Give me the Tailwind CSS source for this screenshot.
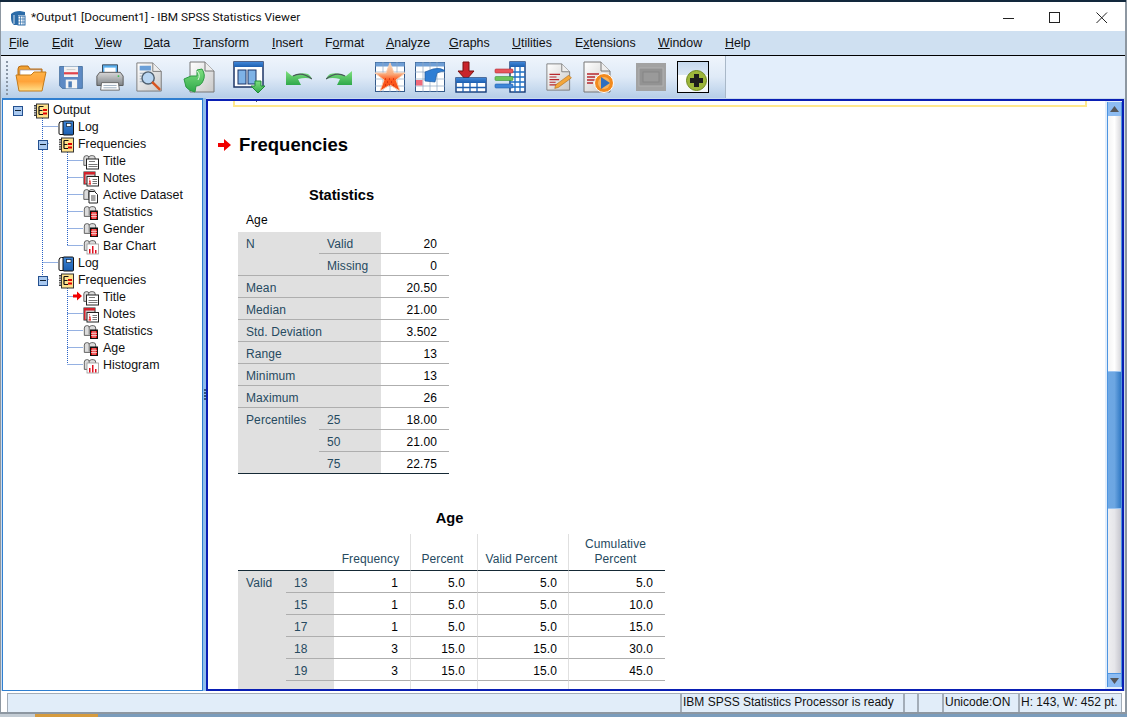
<!DOCTYPE html>
<html lang="en">
<head>
    <meta charset="UTF-8">
    <title>Output1 [Document1] - IBM SPSS Statistics Viewer</title>
    <script src="https://cdn.jsdelivr.net/npm/@tailwindcss/browser@4"></script>
</head>
<body class="w-[1127px] h-[717px] overflow-hidden bg-[#7a9cbc] font-['Liberation_Sans',Arial,sans-serif]">

<!-- shared icons -->
<svg class="absolute w-0 h-0" xmlns="http://www.w3.org/2000/svg">
    <defs>
        <linearGradient id="gFolder" x1="0" y1="0" x2="0" y2="1"><stop offset="0" stop-color="#ffb347"/><stop offset=".5" stop-color="#ffa33a"/><stop offset="1" stop-color="#ffe08a"/></linearGradient>
        <linearGradient id="gBlue" x1="0" y1="0" x2="0" y2="1"><stop offset="0" stop-color="#3f86d8"/><stop offset="1" stop-color="#1d5fb0"/></linearGradient>
        <linearGradient id="gGray" x1="0" y1="0" x2="0" y2="1"><stop offset="0" stop-color="#d8d8d8"/><stop offset="1" stop-color="#7f8488"/></linearGradient>
        <linearGradient id="gGreen" x1="0" y1="0" x2="0" y2="1"><stop offset="0" stop-color="#7fe07f"/><stop offset="1" stop-color="#2fa84a"/></linearGradient>
        <linearGradient id="gPage" x1="0" y1="0" x2="1" y2="1"><stop offset="0" stop-color="#ffffff"/><stop offset="1" stop-color="#c8c8c8"/></linearGradient>
        <linearGradient id="gStar" x1="0" y1="0" x2="0" y2="1"><stop offset="0" stop-color="#f8d9bd"/><stop offset=".4" stop-color="#f9a878"/><stop offset=".6" stop-color="#ff5a1e"/><stop offset="1" stop-color="#f04a14"/></linearGradient>

        <symbol id="iBook" viewBox="0 0 16 16">
            <path d="M1 5 Q1 2 4 2 L5 2 Q7 2 7 4 Q8 2 10 2 L12 2 Q15 2 15 5 L15 14 L1 14Z" fill="#dcdcdc" stroke="#333" stroke-width=".9"/>
            <path d="M7 4V13" stroke="#333" stroke-width=".8"/>
        </symbol>
        <symbol id="iOutput" viewBox="0 0 15 16">
            <rect x="2.500" y="1" width="12" height="14" fill="#ffe28a" stroke="#333"/>
            <path d="M1 2v12" stroke="#111" stroke-width="1.600" stroke-dasharray="1.400 1"/>
            <path d="M5 3.500h4.500M5 3.500v8M5 7.500h3.500M5 11.500h4" stroke="#111" stroke-width="1.200" fill="none"/>
            <rect x="9" y="6" width="4" height="2" fill="#e00000"/><rect x="9" y="9.500" width="4" height="2" fill="#e00000"/>
        </symbol>
        <symbol id="iLog" viewBox="0 0 16 16">
            <path d="M1 4 Q1 1.500 3.500 1.500 L8 1.500 L8 14.500 L2 14.500 Q1 14.500 1 13Z" fill="#fff" stroke="#111"/>
            <rect x="5" y="1" width="10.500" height="14" rx="1" fill="url(#gBlue)" stroke="#111"/>
            <rect x="8.500" y="3.500" width="4.500" height="3" fill="#fff" stroke="#123" stroke-width=".7"/>
        </symbol>
        <symbol id="iTitle" viewBox="0 0 16 16">
            <use href="#iBook" width="13" height="13" y="0"/>
            <rect x="3.500" y="5" width="12" height="10" fill="#fff" stroke="#222"/>
            <path d="M6 8l1-1 1 1 1-1 1 1 1-1 1 1M5.500 10.500h9M5.500 12.500h9" stroke="#555" stroke-width=".8" fill="none"/>
        </symbol>
        <symbol id="iNotes" viewBox="0 0 16 16">
            <rect x="1" y="1" width="11" height="12" fill="#c9c9c9" stroke="#222"/>
            <path d="M1 1h11v2.500h-9.500v9.500H1Z" fill="#d2202a"/>
            <rect x="4" y="5.500" width="11.500" height="9.500" fill="#fff" stroke="#222"/>
            <path d="M6.500 7.500v.8M6 10h1v3M5.500 13h2.500" stroke="#e00000" stroke-width="1.100" fill="none"/>
            <path d="M9.500 8.500h4.500M9.500 10.500h4.500M9.500 12.500h4.500" stroke="#555" stroke-width=".8"/>
        </symbol>
        <symbol id="iDataset" viewBox="0 0 16 16">
            <use href="#iBook" width="13" height="13" y="0"/>
            <path d="M6 3.500h5.500l3 3V15H6Z" fill="#fff" stroke="#222"/>
            <path d="M8 8h4.500M8 10h4.500M8 12h4.500" stroke="#333" stroke-width=".9"/>
        </symbol>
        <symbol id="iTable" viewBox="0 0 16 16">
            <use href="#iBook" width="14" height="13" y="0"/>
            <rect x="7" y="5.500" width="8" height="9.500" fill="#111"/>
            <rect x="8" y="7" width="6" height="7" fill="#e00000"/>
            <path d="M10 7v7M12 7v7M8 9.300h6M8 11.600h6" stroke="#fff" stroke-width=".7"/>
        </symbol>
        <symbol id="iChart" viewBox="0 0 16 16">
            <use href="#iBook" width="14" height="13" y="0"/>
            <rect x="4" y="5" width="11.500" height="10" fill="#fff" stroke="#999" stroke-width=".8"/>
            <path d="M6 10h1.500v4.500H6zM9 7h1.500v7.500H9zM12 11h1.500v3.500H12z" fill="#e01020"/>
        </symbol>

        <symbol id="tOpen" viewBox="0 0 32 32">
            <path d="M3 8 Q3 5 6 5 H13 L15 8 H27 V14 H3Z" fill="#f0a030" stroke="#b86a10"/>
            <rect x="5" y="9" width="21" height="8" fill="#fff" stroke="#88a" stroke-width=".6"/>
            <path d="M1 14 H16 L19 11 H31 L27 30 H4Z" fill="url(#gFolder)" stroke="#c47a18"/>
        </symbol>
        <symbol id="tSave" viewBox="0 0 32 32">
            <path d="M3 4 H29 V29 H6 L3 26Z" fill="#5d8ac4" stroke="#46709f"/>
            <rect x="8" y="4" width="16" height="12" fill="#f3f3f3"/>
            <rect x="8" y="10.500" width="16" height="2.500" fill="#e0434b"/>
            <path d="M11 7.500h10" stroke="#c9c9c9"/>
            <rect x="10" y="19" width="13" height="10" fill="#f4f4f4"/><rect x="13" y="21" width="4" height="7" fill="#4f7fb8"/>
        </symbol>
        <symbol id="tPrint" viewBox="0 0 32 32">
            <path d="M8 3 H24 V12 H8Z" fill="#5cb0ee" stroke="#345"/>
            <rect x="10" y="6" width="12" height="7" fill="#fff"/>
            <path d="M5 11 H27 L30 15 V25 H2 V15Z" fill="url(#gGray)" stroke="#555"/>
            <circle cx="25" cy="15" r="1" fill="#36c24a"/>
            <path d="M7 22 H25 L26 30 H6Z" fill="#fff" stroke="#666"/>
            <path d="M9 25h14M9 27.500h14" stroke="#9ab"/>
        </symbol>
        <symbol id="tPreview" viewBox="0 0 32 32">
            <path d="M2 1 H19 L28 10 V31 H2Z" fill="url(#gPage)" stroke="#777"/>
            <path d="M19 1V10H28" fill="#eee" stroke="#777"/>
            <rect x="5" y="4" width="12" height="5" fill="#6a9fd8"/>
            <path d="M5 12h6M5 15h4M5 18h4M5 21h6" stroke="#9ab"/>
            <circle cx="14" cy="17" r="6.500" fill="#b9d6f2" stroke="#50606f" stroke-width="1.500"/>
            <path d="M19 22 L26 29" stroke="#d8541e" stroke-width="2.600" stroke-linecap="round"/>
        </symbol>
        <symbol id="tRecall" viewBox="0 0 32 32">
            <path d="M7 1 H22 L31 10 V31 H7Z" fill="url(#gPage)" stroke="#777"/>
            <path d="M22 1V10H31" fill="#eee" stroke="#777"/>
            <path d="M1 18 L8 15 H14 V9 L19 8 Q23 14 20 20 Q18 25 13 25 L12 31 Q6 30 3 26Z" fill="url(#gGreen)" stroke="#2e9a44"/>
            <path d="M14 10 Q18 14 15 19" stroke="#dff7df" fill="none"/>
        </symbol>
        <symbol id="tDesignate" viewBox="0 0 32 32">
            <rect x="1" y="1" width="29" height="25" fill="#fff" stroke="#1c3566" stroke-width="1.500"/>
            <rect x="1" y="1" width="29" height="5" fill="url(#gBlue)"/>
            <rect x="5" y="9" width="8" height="14" fill="#7eb2e6" stroke="#1c3566"/>
            <rect x="15" y="9" width="8" height="14" fill="#7eb2e6" stroke="#1c3566"/>
            <path d="M22 20 H28 V25 H32 L25 32 L18 25 H22Z" fill="url(#gGreen)" stroke="#1f8a38"/>
        </symbol>
        <symbol id="tUndo" viewBox="0 0 26 14">
            <path d="M0 0 L6 5 Q14 1 22 3 Q25 5 26 8 Q20 6 12 8 L15 14 H0Z" fill="url(#gGreen)"/>
            <path d="M7 5 Q16 0 26 8" stroke="#4a5a5a" stroke-width="1.300" fill="none"/>
        </symbol>
        <symbol id="tRedo" viewBox="0 0 26 14">
            <path d="M26 0 L20 5 Q12 1 4 3 Q1 5 0 8 Q6 6 14 8 L11 14 H26Z" fill="url(#gGreen)"/>
            <path d="M19 5 Q10 0 0 8" stroke="#4a5a5a" stroke-width="1.300" fill="none"/>
        </symbol>
        <symbol id="tStar" viewBox="0 0 30 30">
            <rect x=".5" y=".5" width="29" height="29" fill="#fff" stroke="#345a8a"/>
            <rect x=".5" y=".5" width="29" height="4" fill="#6f9fd6"/>
            <path d="M8 0v30M15 0v30M22 0v30M0 10h30M0 17h30M0 24h30" stroke="#8fa6c2" stroke-width=".7"/>
            <path d="M15 1 L19 11 L30 11 L21 18 L25 29 L15 23 L5 29 L9 18 L0 11 L11 11Z" fill="url(#gStar)" stroke="#f7cdb0"/>
            <path d="M10 17h1M14 17h1M18 17h1M12 20h1M16 20h1M10 23h1M14 23h1M18 23h1" stroke="#b81808"/>
        </symbol>
        <symbol id="tGoto" viewBox="0 0 30 30">
            <rect x=".5" y=".5" width="29" height="29" fill="#fff" stroke="#345a8a"/>
            <rect x=".5" y=".5" width="29" height="4" fill="#6f9fd6"/>
            <path d="M8 0v30M15 0v30M22 0v30M0 10h30M0 17h30M0 24h30" stroke="#8fa6c2" stroke-width=".7"/>
            <rect x="1" y="18" width="6.500" height="5.500" fill="#f0697a"/>
            <path d="M10 10 L18 7 Q25 5 31 9 Q26 9 22 11 L20 20 L10 19Z" fill="#2f7ed4" stroke="#1c5aa0" stroke-width=".7"/>
        </symbol>
        <symbol id="tInsert" viewBox="0 0 32 32">
            <path d="M8 1 H14 V10 H19 L11 19 L3 10 H8Z" fill="#c9242b" stroke="#7a1010"/>
            <rect x="1" y="17" width="30" height="14" fill="#fff" stroke="#123a78" stroke-width="1.400"/>
            <rect x="1" y="17" width="30" height="5" fill="url(#gBlue)"/>
            <path d="M8 22v9M15 22v9M22 22v9M1 26.500h30" stroke="#1d5fb0" stroke-width="1.300"/>
        </symbol>
        <symbol id="tSelect" viewBox="0 0 32 32">
            <rect x="16" y="1" width="15" height="30" fill="#fff" stroke="#123a78" stroke-width="1.400"/>
            <rect x="16" y="1" width="15" height="5" fill="url(#gBlue)"/>
            <path d="M21 6v25M26 6v25M16 11h15M16 16h15M16 21h15M16 26h15" stroke="#1d6fc4" stroke-width="1.300"/>
            <rect x="1" y="8" width="18" height="4" rx="1" fill="#e8555c" stroke="#b03038" stroke-width=".6"/>
            <rect x="1" y="15.500" width="18" height="4" rx="1" fill="#6cc45a" stroke="#3d9038" stroke-width=".6"/>
            <rect x="1" y="23" width="18" height="4" rx="1" fill="#3f86d8" stroke="#1d5fb0" stroke-width=".6"/>
        </symbol>
        <symbol id="tEdit" viewBox="0 0 32 32">
            <path d="M1 1 H18 L27 10 V31 H1Z" fill="url(#gPage)" stroke="#777"/>
            <path d="M18 1V10H27" fill="#eee" stroke="#777"/>
            <path d="M4 13h12M4 16h8M4 19h11M4 22h7M4 25h9" stroke="#b8282e" stroke-width="1.400"/>
            <path d="M11 25 L26 14 L29 17 L14 28 L10 29Z" fill="#f3a63a" stroke="#b06c18" stroke-width=".7"/>
        </symbol>
        <symbol id="tPlay" viewBox="0 0 32 32">
            <path d="M1 1 H18 L27 10 V31 H1Z" fill="url(#gPage)" stroke="#777"/>
            <path d="M18 1V10H27" fill="#eee" stroke="#777"/>
            <path d="M4 13h12M4 16h8M4 19h9M4 22h6" stroke="#b8282e" stroke-width="1.400"/>
            <circle cx="21" cy="22" r="9.500" fill="#f28a1e" stroke="#fff"/>
            <circle cx="21" cy="22" r="6" fill="#f6b25c"/>
            <path d="M18 16 L27 22 L18 28Z" fill="#2f6fc0"/>
        </symbol>
        <symbol id="tGrey" viewBox="0 0 30 28">
            <rect width="30" height="28" fill="#a2a2a2"/>
            <rect x="3" y="5" width="24" height="18" fill="#939393" stroke="#b0b0b0"/>
            <rect x="7" y="9" width="16" height="10" fill="#9a9a9a" stroke="#868686"/>
        </symbol>
    </defs>
</svg>

<!-- window -->
<div class="flex flex-col h-[714px] border-l border-r-2 border-b-2 border-[#8d97a1] bg-white">
    <div class="h-[2px] shrink-0 -mx-[1px] bg-[#12283c]"></div>

    <!-- title bar -->
    <div class="h-[29px] shrink-0 pt-[2px] bg-white flex items-center text-[#111]">
        <svg class="w-[16px] h-[16px] ml-[9px]" viewBox="0 0 16 16">
            <path d="M1 4 Q4 1 10 1 L15 2 V5 H8 V15 H4 Q1 13 1 8Z" fill="#2b6ba8"/>
            <rect x="8" y="6" width="7" height="9" fill="#fff" stroke="#2b6ba8"/>
            <path d="M10.500 6v9M13 6v9M8 9h7M8 12h7" stroke="#2b6ba8" stroke-width=".7"/>
            <path d="M4 5v9" stroke="#fff" stroke-width=".8"/>
        </svg>
        <span class="ml-[5px] font-['Roboto',sans-serif] text-[11.8px]">*Output1 [Document1] - IBM SPSS Statistics Viewer</span>
        <div class="ml-auto flex items-center">
            <svg class="w-[12px] h-[12px] mr-[34px]" viewBox="0 0 12 12"><path d="M0 6.500h11" stroke="#222"/></svg>
            <svg class="w-[12px] h-[12px] mr-[35px]" viewBox="0 0 12 12"><rect x=".5" y=".5" width="10" height="10" fill="none" stroke="#222"/></svg>
            <svg class="w-[12px] h-[12px] mr-[17px]" viewBox="0 0 12 12"><path d="M.5.500l10.500 10.500M11 .5L.5 11" stroke="#222"/></svg>
        </div>
    </div>

    <!-- menu -->
    <div class="h-[25px] shrink-0 bg-[#cfe0f1] border-b border-black flex items-center pl-[8px] text-[12.4px] text-[#111]">
        <span class="w-[43px]"><u>F</u>ile</span>
        <span class="w-[43px]"><u>E</u>dit</span>
        <span class="w-[49px]"><u>V</u>iew</span>
        <span class="w-[49px]"><u>D</u>ata</span>
        <span class="w-[79px]"><u>T</u>ransform</span>
        <span class="w-[53px]"><u>I</u>nsert</span>
        <span class="w-[61px]">F<u>o</u>rmat</span>
        <span class="w-[63px]"><u>A</u>nalyze</span>
        <span class="w-[63px]"><u>G</u>raphs</span>
        <span class="w-[63px]"><u>U</u>tilities</span>
        <span class="w-[83px]">E<u>x</u>tensions</span>
        <span class="w-[67px]"><u>W</u>indow</span>
        <span><u>H</u>elp</span>
    </div>

    <!-- toolbar -->
    <div class="h-[42px] shrink-0 bg-[#e3eefb] flex">
        <div class="w-[725px] border-r border-[#a9b8c8] bg-gradient-to-b from-[#eff5fc] via-[#dfeaf7] to-[#b6cee8] flex items-center relative">
            <div class="absolute left-[5px] top-[5px] bottom-[3px] w-[2px] border-l-2 border-dotted border-[#8a97a6]"></div>
            <svg class="w-[32px] h-[32px] ml-[14px]"><use href="#tOpen"/></svg>
            <svg class="w-[28px] h-[30px] ml-[10px]"><use href="#tSave"/></svg>
            <svg class="w-[30px] h-[30px] ml-[10px]"><use href="#tPrint"/></svg>
            <svg class="w-[30px] h-[32px] ml-[10px]"><use href="#tPreview"/></svg>
            <svg class="w-[32px] h-[32px] ml-[18px]"><use href="#tRecall"/></svg>
            <svg class="w-[32px] h-[32px] ml-[18px]"><use href="#tDesignate"/></svg>
            <svg class="w-[26px] h-[14px] ml-[21px] mt-[2px]"><use href="#tUndo"/></svg>
            <svg class="w-[26px] h-[14px] ml-[14px] mt-[2px]"><use href="#tRedo"/></svg>
            <svg class="w-[30px] h-[30px] ml-[23px]"><use href="#tStar"/></svg>
            <svg class="w-[30px] h-[30px] ml-[10px]"><use href="#tGoto"/></svg>
            <svg class="w-[32px] h-[32px] ml-[10px]"><use href="#tInsert"/></svg>
            <svg class="w-[32px] h-[32px] ml-[7px]"><use href="#tSelect"/></svg>
            <svg class="w-[28px] h-[32px] ml-[20px]"><use href="#tEdit"/></svg>
            <svg class="w-[32px] h-[32px] ml-[9px]"><use href="#tPlay"/></svg>
            <svg class="w-[30px] h-[28px] ml-[21px]"><use href="#tGrey"/></svg>
            <div class="w-[32px] h-[32px] ml-[11px] border border-black bg-[linear-gradient(#c6d9ee,#dbe7f5_42%,#fff_43%,#f2f6fb)] flex items-end justify-end pr-[1px] pb-[1px]">
                <svg class="w-[21px] h-[21px]" viewBox="0 0 21 21">
                    <circle cx="10.500" cy="10.500" r="10" fill="#9cb53a" stroke="#6f8a20"/>
                    <path d="M8 4h5v4h4v5h-4v4H8v-4H4V8h4Z" fill="#1c1c1c"/>
                </svg>
            </div>
        </div>
    </div>

    <!-- main area -->
    <div class="h-[593px] shrink-0 flex bg-[#c9dbee]">
        <!-- outline -->
        <div class="relative w-[201px] ml-[1px] shrink-0 bg-white border-t-2 border-x border-b border-[#2f7fd0] text-[12.4px] text-[#111] overflow-hidden">
            <svg class="absolute left-0 top-0 w-[200px] h-[300px]" viewBox="0 0 200 300" fill="none" stroke="#2a62c4" stroke-dasharray="1 1">
                <path d="M39.500 18V179M39.500 26.500H55M39.500 43.500H46M39.500 162.500H55M39.500 179.500H46"/>
                <path d="M64.500 52V145M64.500 60.500H80M64.500 77.500H80M64.500 94.500H80M64.500 111.500H80M64.500 128.500H80M64.500 145.500H80"/>
                <path d="M64.500 188V264M64.500 196.500H70M64.500 213.500H80M64.500 230.500H80M64.500 247.500H80M64.500 264.500H80"/>
                <path d="M70 194.500h4v-3l5 4.500-5 4.500v-3h-4z" fill="#f00000" stroke="none"/>
            </svg>
            <div class="relative mt-[2px]">
                <div class="h-[17px] flex items-center pl-[10px]">
                    <span class="w-[10px] h-[10px] border border-[#24508f] bg-[#a9c9f0] flex items-center justify-center"><span class="w-[6px] h-[1px] bg-[#123]"></span></span>
                    <svg class="w-[15px] h-[16px] ml-[11px]"><use href="#iOutput"/></svg><span class="ml-[4px]">Output</span>
                </div>
                <div class="h-[17px] flex items-center pl-[55px]"><svg class="w-[16px] h-[16px]"><use href="#iLog"/></svg><span class="ml-[4px]">Log</span></div>
                <div class="h-[17px] flex items-center pl-[35px]">
                    <span class="w-[10px] h-[10px] border border-[#24508f] bg-[#a9c9f0] flex items-center justify-center"><span class="w-[6px] h-[1px] bg-[#123]"></span></span>
                    <svg class="w-[15px] h-[16px] ml-[11px]"><use href="#iOutput"/></svg><span class="ml-[4px]">Frequencies</span>
                </div>
                <div class="h-[17px] flex items-center pl-[80px]"><svg class="w-[16px] h-[16px]"><use href="#iTitle"/></svg><span class="ml-[4px]">Title</span></div>
                <div class="h-[17px] flex items-center pl-[80px]"><svg class="w-[16px] h-[16px]"><use href="#iNotes"/></svg><span class="ml-[4px]">Notes</span></div>
                <div class="h-[17px] flex items-center pl-[80px]"><svg class="w-[16px] h-[16px]"><use href="#iDataset"/></svg><span class="ml-[4px]">Active Dataset</span></div>
                <div class="h-[17px] flex items-center pl-[80px]"><svg class="w-[16px] h-[16px]"><use href="#iTable"/></svg><span class="ml-[4px]">Statistics</span></div>
                <div class="h-[17px] flex items-center pl-[80px]"><svg class="w-[16px] h-[16px]"><use href="#iTable"/></svg><span class="ml-[4px]">Gender</span></div>
                <div class="h-[17px] flex items-center pl-[80px]"><svg class="w-[16px] h-[16px]"><use href="#iChart"/></svg><span class="ml-[4px]">Bar Chart</span></div>
                <div class="h-[17px] flex items-center pl-[55px]"><svg class="w-[16px] h-[16px]"><use href="#iLog"/></svg><span class="ml-[4px]">Log</span></div>
                <div class="h-[17px] flex items-center pl-[35px]">
                    <span class="w-[10px] h-[10px] border border-[#24508f] bg-[#a9c9f0] flex items-center justify-center"><span class="w-[6px] h-[1px] bg-[#123]"></span></span>
                    <svg class="w-[15px] h-[16px] ml-[11px]"><use href="#iOutput"/></svg><span class="ml-[4px]">Frequencies</span>
                </div>
                <div class="h-[17px] flex items-center pl-[80px]"><svg class="w-[16px] h-[16px]"><use href="#iTitle"/></svg><span class="ml-[4px]">Title</span></div>
                <div class="h-[17px] flex items-center pl-[80px]"><svg class="w-[16px] h-[16px]"><use href="#iNotes"/></svg><span class="ml-[4px]">Notes</span></div>
                <div class="h-[17px] flex items-center pl-[80px]"><svg class="w-[16px] h-[16px]"><use href="#iTable"/></svg><span class="ml-[4px]">Statistics</span></div>
                <div class="h-[17px] flex items-center pl-[80px]"><svg class="w-[16px] h-[16px]"><use href="#iTable"/></svg><span class="ml-[4px]">Age</span></div>
                <div class="h-[17px] flex items-center pl-[80px]"><svg class="w-[16px] h-[16px]"><use href="#iChart"/></svg><span class="ml-[4px]">Histogram</span></div>
            </div>
        </div>

        <!-- splitter -->
        <div class="w-[3px] shrink-0 bg-[#8fbdeb] flex flex-col items-center justify-center gap-[1px]">
            <span class="w-[2px] h-[2px] bg-[#37557a]"></span>
            <span class="w-[2px] h-[2px] bg-[#37557a]"></span>
            <span class="w-[2px] h-[2px] bg-[#37557a]"></span>
            <span class="w-[2px] h-[2px] bg-[#37557a]"></span>
        </div>

        <!-- output pane -->
        <div class="w-[918px] shrink-0 mt-[1px] h-[592px] border-2 border-[#0a1fb4] bg-[#e3eefb] flex">
            <div class="w-[897px] shrink-0 bg-white overflow-hidden text-[12px] text-[#010205] tracking-[0.1px]">
                <div class="w-[854px] h-[6px] ml-[25px] border-x-2 border-b-2 border-[#ffe88c]">
                    <div class="ml-[21px] w-[1px] h-[1px] bg-[#555]"></div>
                </div>

                <div class="flex items-center mt-[26px] ml-[10px] h-[24px]">
                    <svg class="w-[13px] h-[12px]" viewBox="0 0 13 12"><path d="M0 4h6V0l7 6-7 6V8H0Z" fill="#f00000"/></svg>
                    <span class="ml-[8px] text-[18.5px] font-bold tracking-normal">Frequencies</span>
                </div>

                <!-- statistics table -->
                <div class="ml-[30px] mt-[27px] w-[211px]">
                    <div class="h-[22px] flex items-center justify-center pr-[4px] text-[14.67px] font-bold tracking-normal">Statistics</div>
                    <div class="h-[14px] mt-[7px] pl-[8px] leading-[14px]">Age</div>
                    <table class="mt-[5px] w-[211px] table-fixed border-separate border-spacing-0 [&_td]:pt-[3px]">
                        <colgroup><col class="w-[81px]"><col class="w-[62px]"><col class="w-[68px]"></colgroup>
                        <tbody>
                            <tr class="h-[22px]">
                                <td rowspan="2" class="bg-[#e0e0e0] border-b border-[#aeaeae] align-top pl-[8px] text-[#264a60]">N</td>
                                <td class="bg-[#e0e0e0] border-b border-[#aeaeae] pl-[8px] text-[#264a60]">Valid</td>
                                <td class="border-b border-[#aeaeae] text-right pr-[12px]">20</td>
                            </tr>
                            <tr class="h-[22px]">
                                <td class="bg-[#e0e0e0] border-b border-[#aeaeae] pl-[8px] text-[#264a60]">Missing</td>
                                <td class="border-b border-[#aeaeae] text-right pr-[12px]">0</td>
                            </tr>
                            <tr class="h-[22px]"><td colspan="2" class="bg-[#e0e0e0] border-b border-[#aeaeae] pl-[8px] text-[#264a60]">Mean</td><td class="border-b border-[#aeaeae] text-right pr-[12px]">20.50</td></tr>
                            <tr class="h-[22px]"><td colspan="2" class="bg-[#e0e0e0] border-b border-[#aeaeae] pl-[8px] text-[#264a60]">Median</td><td class="border-b border-[#aeaeae] text-right pr-[12px]">21.00</td></tr>
                            <tr class="h-[22px]"><td colspan="2" class="bg-[#e0e0e0] border-b border-[#aeaeae] pl-[8px] text-[#264a60]">Std. Deviation</td><td class="border-b border-[#aeaeae] text-right pr-[12px]">3.502</td></tr>
                            <tr class="h-[22px]"><td colspan="2" class="bg-[#e0e0e0] border-b border-[#aeaeae] pl-[8px] text-[#264a60]">Range</td><td class="border-b border-[#aeaeae] text-right pr-[12px]">13</td></tr>
                            <tr class="h-[22px]"><td colspan="2" class="bg-[#e0e0e0] border-b border-[#aeaeae] pl-[8px] text-[#264a60]">Minimum</td><td class="border-b border-[#aeaeae] text-right pr-[12px]">13</td></tr>
                            <tr class="h-[22px]"><td colspan="2" class="bg-[#e0e0e0] border-b border-[#aeaeae] pl-[8px] text-[#264a60]">Maximum</td><td class="border-b border-[#aeaeae] text-right pr-[12px]">26</td></tr>
                            <tr class="h-[22px]">
                                <td rowspan="3" class="bg-[#e0e0e0] border-b border-[#152935] align-top pl-[8px] text-[#264a60]">Percentiles</td>
                                <td class="bg-[#e0e0e0] border-b border-[#aeaeae] pl-[8px] text-[#264a60]">25</td>
                                <td class="border-b border-[#aeaeae] text-right pr-[12px]">18.00</td>
                            </tr>
                            <tr class="h-[22px]">
                                <td class="bg-[#e0e0e0] border-b border-[#aeaeae] pl-[8px] text-[#264a60]">50</td>
                                <td class="border-b border-[#aeaeae] text-right pr-[12px]">21.00</td>
                            </tr>
                            <tr class="h-[22px]">
                                <td class="bg-[#e0e0e0] border-b border-[#152935] pl-[8px] text-[#264a60]">75</td>
                                <td class="border-b border-[#152935] text-right pr-[12px]">22.75</td>
                            </tr>
                        </tbody>
                    </table>
                </div>

                <!-- age table -->
                <div class="ml-[30px] mt-[33px] w-[427px]">
                    <div class="h-[22px] flex items-center justify-center pr-[4px] text-[14.67px] font-bold tracking-normal">Age</div>
                    <table class="mt-[5px] w-[427px] table-fixed border-separate border-spacing-0 [&_td]:pt-[3px]">
                        <colgroup><col class="w-[48px]"><col class="w-[48px]"><col class="w-[76px]"><col class="w-[67px]"><col class="w-[91px]"><col class="w-[97px]"></colgroup>
                        <thead class="font-normal text-[#264a60]">
                            <tr class="h-[37px]">
                                <th class="border-b border-[#152935]"></th>
                                <th class="border-b border-[#152935]"></th>
                                <th class="border-b border-[#152935] font-normal align-bottom pb-[3px] pr-[3px] leading-[15px]">Frequency</th>
                                <th class="border-b border-l border-[#152935] border-l-[#e0e0e0] font-normal align-bottom pb-[3px] pr-[3px] leading-[15px]">Percent</th>
                                <th class="border-b border-l border-[#152935] border-l-[#e0e0e0] font-normal align-bottom pb-[3px] pr-[3px] leading-[15px]">Valid Percent</th>
                                <th class="border-b border-l border-[#152935] border-l-[#e0e0e0] font-normal align-bottom pb-[3px] pr-[3px] leading-[15px]">Cumulative<br>Percent</th>
                            </tr>
                        </thead>
                        <tbody>
                            <tr class="h-[22px]">
                                <td rowspan="6" class="bg-[#e0e0e0] align-top pl-[8px] text-[#264a60]">Valid</td>
                                <td class="bg-[#e0e0e0] border-b border-[#aeaeae] pl-[8px] text-[#264a60]">13</td>
                                <td class="border-b border-[#aeaeae] text-right pr-[12px]">1</td>
                                <td class="border-b border-l border-[#aeaeae] border-l-[#e0e0e0] text-right pr-[12px]">5.0</td>
                                <td class="border-b border-l border-[#aeaeae] border-l-[#e0e0e0] text-right pr-[11px]">5.0</td>
                                <td class="border-b border-l border-[#aeaeae] border-l-[#e0e0e0] text-right pr-[12px]">5.0</td>
                            </tr>
                            <tr class="h-[22px]">
                                <td class="bg-[#e0e0e0] border-b border-[#aeaeae] pl-[8px] text-[#264a60]">15</td>
                                <td class="border-b border-[#aeaeae] text-right pr-[12px]">1</td>
                                <td class="border-b border-l border-[#aeaeae] border-l-[#e0e0e0] text-right pr-[12px]">5.0</td>
                                <td class="border-b border-l border-[#aeaeae] border-l-[#e0e0e0] text-right pr-[11px]">5.0</td>
                                <td class="border-b border-l border-[#aeaeae] border-l-[#e0e0e0] text-right pr-[12px]">10.0</td>
                            </tr>
                            <tr class="h-[22px]">
                                <td class="bg-[#e0e0e0] border-b border-[#aeaeae] pl-[8px] text-[#264a60]">17</td>
                                <td class="border-b border-[#aeaeae] text-right pr-[12px]">1</td>
                                <td class="border-b border-l border-[#aeaeae] border-l-[#e0e0e0] text-right pr-[12px]">5.0</td>
                                <td class="border-b border-l border-[#aeaeae] border-l-[#e0e0e0] text-right pr-[11px]">5.0</td>
                                <td class="border-b border-l border-[#aeaeae] border-l-[#e0e0e0] text-right pr-[12px]">15.0</td>
                            </tr>
                            <tr class="h-[22px]">
                                <td class="bg-[#e0e0e0] border-b border-[#aeaeae] pl-[8px] text-[#264a60]">18</td>
                                <td class="border-b border-[#aeaeae] text-right pr-[12px]">3</td>
                                <td class="border-b border-l border-[#aeaeae] border-l-[#e0e0e0] text-right pr-[12px]">15.0</td>
                                <td class="border-b border-l border-[#aeaeae] border-l-[#e0e0e0] text-right pr-[11px]">15.0</td>
                                <td class="border-b border-l border-[#aeaeae] border-l-[#e0e0e0] text-right pr-[12px]">30.0</td>
                            </tr>
                            <tr class="h-[22px]">
                                <td class="bg-[#e0e0e0] border-b border-[#aeaeae] pl-[8px] text-[#264a60]">19</td>
                                <td class="border-b border-[#aeaeae] text-right pr-[12px]">3</td>
                                <td class="border-b border-l border-[#aeaeae] border-l-[#e0e0e0] text-right pr-[12px]">15.0</td>
                                <td class="border-b border-l border-[#aeaeae] border-l-[#e0e0e0] text-right pr-[11px]">15.0</td>
                                <td class="border-b border-l border-[#aeaeae] border-l-[#e0e0e0] text-right pr-[12px]">45.0</td>
                            </tr>
                            <tr class="h-[22px]">
                                <td class="bg-[#e0e0e0]"></td>
                                <td></td>
                                <td class="border-l border-l-[#e0e0e0]"></td>
                                <td class="border-l border-l-[#e0e0e0]"></td>
                                <td class="border-l border-l-[#e0e0e0]"></td>
                            </tr>
                        </tbody>
                    </table>
                </div>
            </div>

            <!-- scrollbar -->
            <div class="w-[15px] ml-[2px] mt-[1px] mb-[2px] shrink-0 flex flex-col border-x border-[#4d94e0]">
                <div class="h-[14px] shrink-0 bg-[#8dbcf2] flex items-center justify-center">
                    <svg class="w-[9px] h-[6px]" viewBox="0 0 9 6"><path d="M4.500 0L9 6H0Z" fill="#55575a"/></svg>
                </div>
                <div class="h-[255px] shrink-0 bg-gradient-to-r from-[#f4f4f4] via-white to-[#d8d8dc]"></div>
                <div class="h-[138px] shrink-0 border-y border-[#9cc4f0] bg-gradient-to-r from-[#6ea8e4] via-[#6ca6e2] to-[#2f79c4]"></div>
                <div class="flex-1 bg-gradient-to-r from-[#eeeef0] via-[#e6e6ea] to-[#c6c6ce]"></div>
                <div class="h-[14px] shrink-0 border-t border-[#4d94e0] bg-[#8dbcf2] flex items-center justify-center">
                    <svg class="w-[9px] h-[6px]" viewBox="0 0 9 6"><path d="M0 0H9L4.500 6Z" fill="#55575a"/></svg>
                </div>
            </div>
        </div>
    </div>

    <!-- status bar -->
    <div class="h-[21px] shrink-0 pl-[6px] pr-[2px] pt-[2px] flex text-[12px] text-[#111] bg-white">
        <div class="w-[674px] border-t border-x border-[#a3adb8] bg-[#e1edf9]"></div>
        <div class="w-[223px] border-t border-x border-[#a3adb8] pl-[1px] leading-[17px] bg-[#e1edf9]">IBM SPSS Statistics Processor is ready</div>
        <div class="w-[14px] border-t border-x border-[#a3adb8] bg-[#e1edf9]"></div>
        <div class="w-[25px] border-t border-x border-[#a3adb8] bg-[#e1edf9]"></div>
        <div class="w-[76px] border-t border-x border-[#a3adb8] pl-[1px] leading-[17px] bg-[#e1edf9]">Unicode:ON</div>
        <div class="w-[103px] border-t border-x border-[#a3adb8] pl-[1px] leading-[17px] bg-[#e1edf9]">H: 143, W: 452 pt.</div>
    </div>
</div>

<!-- desktop behind the window -->
<div class="h-[3px] flex">
    <div class="w-[35px] bg-[#c3ccd4]"></div>
    <div class="w-[63px] bg-[#d69b3e]"></div>
    <div class="flex-1 bg-[#7a9cbc]"></div>
</div>
</body>
</html>
